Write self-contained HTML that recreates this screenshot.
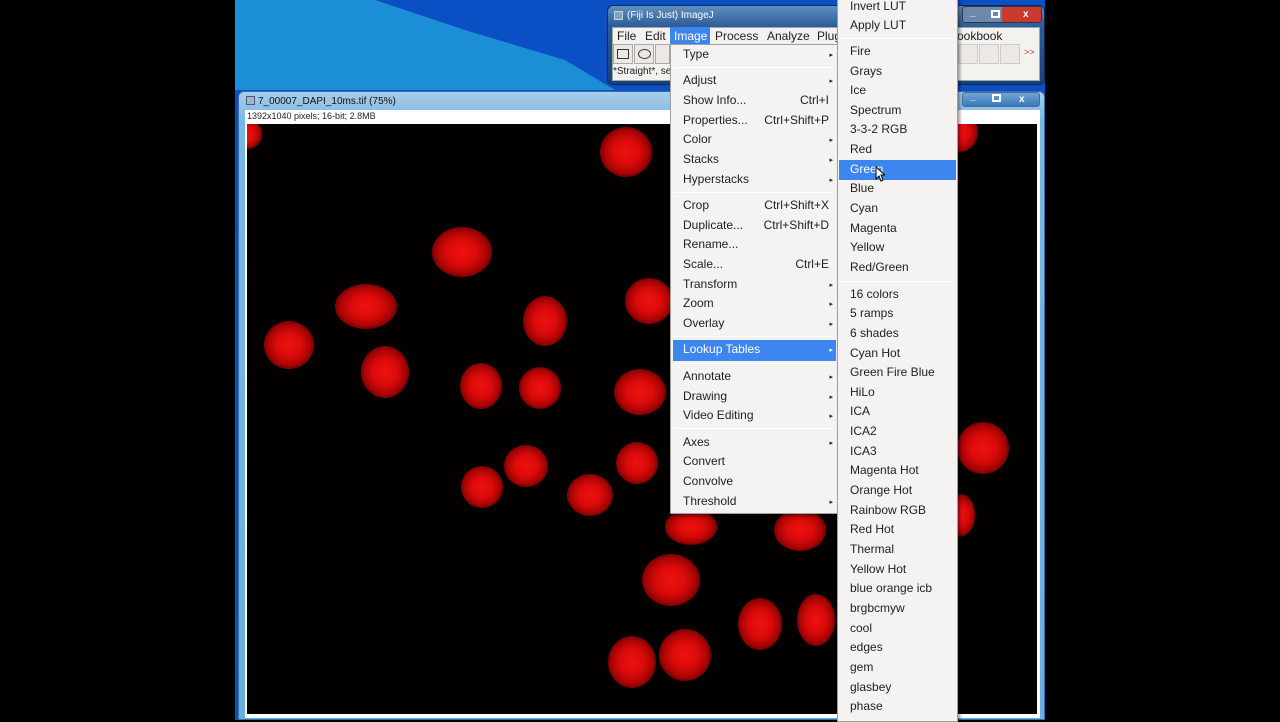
<!DOCTYPE html>
<html><head><meta charset="utf-8"><style>
*{margin:0;padding:0;box-sizing:border-box}
body{width:1280px;height:720px;overflow:hidden;background:#000;position:relative;font-family:"Liberation Sans",sans-serif;font-size:12px;color:#1e1e1e}
.abs{position:absolute}
#desk{left:235px;top:0;width:810px;height:720px;background:#0a4fc4;overflow:hidden}
.n{position:absolute;border-radius:50%;background:radial-gradient(ellipse at center,#ec1212 0%,#dc0a0a 35%,#a80404 60%,#4a0000 80%,rgba(20,0,0,0) 100%)}
.mi{position:absolute;left:12px;white-space:nowrap}
.sc{position:absolute;right:8px}
.ar{position:absolute;right:4px;font-size:7px}
.sep{position:absolute;left:3px;right:3px;height:1px;background:#c8c8c8;border-bottom:1px solid #fff}
.si{position:absolute;left:12px;white-space:nowrap}
</style></head><body>
<div id="desk" class="abs">
 <div class="abs" style="left:0;top:0;width:810px;height:720px;background:#1c8ed6;clip-path:polygon(0 0,140px 0,230px 30px,330px 60px,380px 90px,0 90px)"></div>
</div>
<!-- image window -->
<div class="abs" style="left:238px;top:91px;width:807px;height:629px;background:linear-gradient(#a8cdea,#7ab6e4 30px,#6aaede);border:1px solid #3b6ea8;border-radius:6px 6px 0 0"></div>
<div class="abs" style="left:258px;top:96px;font-size:10px;color:#111">7_00007_DAPI_10ms.tif (75%)</div>
<div class="abs" style="left:246px;top:96px;width:9px;height:9px;border:1px solid #557;background:#9bc"></div>
<div class="abs" style="left:962px;top:92px;width:78px;height:15px;border:1px solid #4a6b9a;border-radius:3px;background:linear-gradient(#6fa6d6,#3d78b8);color:#fff;font-size:10px;font-weight:bold">
 <span class="abs" style="left:7px;top:-2px">_</span><span class="abs" style="left:29px;top:1px;width:9px;height:8px;border:2px solid #fff"></span><span class="abs" style="left:56px;top:1px">x</span></div>
<div class="abs" style="left:245px;top:110px;width:795px;height:608px;background:#fff"></div>
<div class="abs" style="left:247px;top:111px;font-size:9px;color:#222">1392x1040 pixels; 16-bit; 2.8MB</div>
<div class="abs" style="left:247px;top:124px;width:790px;height:590px;background:#030000;overflow:hidden">
 <div class="n" style="left:-15px;top:-5px;width:30px;height:30px"></div>
 <div class="n" style="left:353px;top:3px;width:52px;height:50px"></div>
 <div class="n" style="left:185px;top:103px;width:60px;height:50px"></div>
 <div class="n" style="left:88px;top:160px;width:62px;height:45px"></div>
 <div class="n" style="left:17px;top:197px;width:50px;height:48px"></div>
 <div class="n" style="left:276px;top:172px;width:44px;height:50px"></div>
 <div class="n" style="left:114px;top:222px;width:48px;height:52px"></div>
 <div class="n" style="left:213px;top:239px;width:42px;height:46px"></div>
 <div class="n" style="left:272px;top:243px;width:42px;height:42px"></div>
 <div class="n" style="left:367px;top:245px;width:52px;height:46px"></div>
 <div class="n" style="left:378px;top:154px;width:48px;height:46px"></div>
 <div class="n" style="left:257px;top:321px;width:44px;height:42px"></div>
 <div class="n" style="left:214px;top:342px;width:42px;height:42px"></div>
 <div class="n" style="left:320px;top:350px;width:46px;height:42px"></div>
 <div class="n" style="left:369px;top:318px;width:42px;height:42px"></div>
 <div class="n" style="left:418px;top:385px;width:52px;height:36px"></div>
 <div class="n" style="left:527px;top:385px;width:52px;height:42px"></div>
 <div class="n" style="left:395px;top:430px;width:58px;height:52px"></div>
 <div class="n" style="left:491px;top:474px;width:44px;height:52px"></div>
 <div class="n" style="left:550px;top:470px;width:38px;height:52px"></div>
 <div class="n" style="left:361px;top:512px;width:48px;height:52px"></div>
 <div class="n" style="left:412px;top:505px;width:52px;height:52px"></div>
 <div class="n" style="left:710px;top:298px;width:52px;height:52px"></div>
 <div class="n" style="left:700px;top:370px;width:28px;height:42px"></div>
 <div class="n" style="left:695px;top:-12px;width:36px;height:40px"></div>
</div>
<!-- Fiji window -->
<div class="abs" style="left:607px;top:5px;width:438px;height:80px;background:linear-gradient(#5f8fc0,#2e5c98 20px,#1c3f78);border:1px solid #0c2a55;border-radius:6px"></div>
<div class="abs" style="left:627px;top:10px;font-size:10px;color:#fff">(Fiji Is Just) ImageJ</div>
<div class="abs" style="left:614px;top:11px;width:9px;height:9px;border:1px solid #ccd;background:#7ab"></div>
<div class="abs" style="left:962px;top:6px;width:80px;height:17px;border:1px solid #334;border-radius:3px;background:linear-gradient(90deg,#6e88ac 0 50%,#c83a2e 50%);color:#fff;font-size:10px;font-weight:bold">
 <span class="abs" style="left:7px;top:0">_</span><span class="abs" style="left:28px;top:3px;width:9px;height:8px;border:2px solid #fff"></span><span class="abs" style="left:60px;top:2px">x</span></div>
<div class="abs" style="left:612px;top:27px;width:428px;height:54px;background:#f4f2ef;border:1px solid #9aa"></div>
<div class="abs" style="left:617px;top:29px">File</div>
<div class="abs" style="left:645px;top:29px">Edit</div>
<div class="abs" style="left:670px;top:27px;width:40px;height:17px;background:#3d86ef"></div>
<div class="abs" style="left:674px;top:29px;color:#fff">Image</div>
<div class="abs" style="left:715px;top:29px">Process</div>
<div class="abs" style="left:767px;top:29px">Analyze</div>
<div class="abs" style="left:817px;top:29px">Plug</div>
<div class="abs" style="left:957px;top:29px">ookbook</div>
<div class="abs" style="left:613px;top:44px;width:20px;height:20px;border:1px solid #aaa;background:#ece9e4"><div class="abs" style="left:3px;top:4px;width:12px;height:10px;border:1px solid #333"></div></div>
<div class="abs" style="left:634px;top:44px;width:20px;height:20px;border:1px solid #aaa;background:#ece9e4"><div class="abs" style="left:3px;top:4px;width:13px;height:10px;border:1px solid #333;border-radius:50%"></div></div>
<div class="abs" style="left:655px;top:44px;width:15px;height:20px;border:1px solid #aaa;background:#ece9e4"></div>
<div class="abs" style="left:958px;top:44px;width:20px;height:20px;border:1px solid #ccc;background:#ece9e4"></div>
<div class="abs" style="left:979px;top:44px;width:20px;height:20px;border:1px solid #ccc;background:#ece9e4"></div>
<div class="abs" style="left:1000px;top:44px;width:20px;height:20px;border:1px solid #ccc;background:#ece9e4"></div>
<div class="abs" style="left:1024px;top:47px;font-size:9px;color:#c33">&gt;&gt;</div>
<div class="abs" style="left:613px;top:66px;font-size:10px">*Straight*, se</div>
<!-- Image menu -->
<div class="abs" style="left:670px;top:44px;width:168px;height:470px;background:#f5f3f1;border:1px solid #a0a0a0;box-shadow:2px 2px 3px rgba(0,0,0,.4)">
 <div class="mi" style="top:2px">Type</div><div class="ar" style="top:6px">▸</div>
 <div class="sep" style="top:22px"></div>
 <div class="mi" style="top:28px">Adjust</div><div class="ar" style="top:32px">▸</div>
 <div class="mi" style="top:48px">Show Info...</div><div class="sc" style="top:48px">Ctrl+I</div>
 <div class="mi" style="top:68px">Properties...</div><div class="sc" style="top:68px">Ctrl+Shift+P</div>
 <div class="mi" style="top:87px">Color</div><div class="ar" style="top:91px">▸</div>
 <div class="mi" style="top:107px">Stacks</div><div class="ar" style="top:111px">▸</div>
 <div class="mi" style="top:127px">Hyperstacks</div><div class="ar" style="top:131px">▸</div>
 <div class="sep" style="top:147px"></div>
 <div class="mi" style="top:153px">Crop</div><div class="sc" style="top:153px">Ctrl+Shift+X</div>
 <div class="mi" style="top:173px">Duplicate...</div><div class="sc" style="top:173px">Ctrl+Shift+D</div>
 <div class="mi" style="top:192px">Rename...</div>
 <div class="mi" style="top:212px">Scale...</div><div class="sc" style="top:212px">Ctrl+E</div>
 <div class="mi" style="top:232px">Transform</div><div class="ar" style="top:236px">▸</div>
 <div class="mi" style="top:251px">Zoom</div><div class="ar" style="top:255px">▸</div>
 <div class="mi" style="top:271px">Overlay</div><div class="ar" style="top:275px">▸</div>
 <div class="sep" style="top:291px"></div>
 <div class="abs" style="left:2px;top:295px;width:163px;height:21px;background:#3d86ef"></div>
 <div class="mi" style="top:297px;color:#fff">Lookup Tables</div><div class="ar" style="top:301px;color:#fff">▸</div>
 <div class="sep" style="top:318px"></div>
 <div class="mi" style="top:324px">Annotate</div><div class="ar" style="top:328px">▸</div>
 <div class="mi" style="top:344px">Drawing</div><div class="ar" style="top:348px">▸</div>
 <div class="mi" style="top:363px">Video Editing</div><div class="ar" style="top:367px">▸</div>
 <div class="sep" style="top:383px"></div>
 <div class="mi" style="top:390px">Axes</div><div class="ar" style="top:394px">▸</div>
 <div class="mi" style="top:409px">Convert</div>
 <div class="mi" style="top:429px">Convolve</div>
 <div class="mi" style="top:449px">Threshold</div><div class="ar" style="top:453px">▸</div>
</div>
<!-- LUT submenu -->
<div class="abs" style="left:837px;top:-2px;width:121px;height:724px;background:#f5f3f1;border:1px solid #a0a0a0;box-shadow:2px 2px 3px rgba(0,0,0,.4)">
 <div class="si" style="top:0px">Invert LUT</div>
 <div class="si" style="top:19px">Apply LUT</div>
 <div class="sep" style="top:39px"></div>
 <div class="si" style="top:45px">Fire</div>
 <div class="si" style="top:65px">Grays</div>
 <div class="si" style="top:84px">Ice</div>
 <div class="si" style="top:104px">Spectrum</div>
 <div class="si" style="top:123px">3-3-2 RGB</div>
 <div class="si" style="top:143px">Red</div>
 <div class="abs" style="left:1px;top:161px;width:117px;height:20px;background:#3d86ef"></div>
 <div class="si" style="top:163px;color:#fff">Green</div>
 <div class="si" style="top:182px">Blue</div>
 <div class="si" style="top:202px">Cyan</div>
 <div class="si" style="top:222px">Magenta</div>
 <div class="si" style="top:241px">Yellow</div>
 <div class="si" style="top:261px">Red/Green</div>
 <div class="sep" style="top:282px"></div>
 <div class="si" style="top:288px">16 colors</div>
 <div class="si" style="top:307px">5 ramps</div>
 <div class="si" style="top:327px">6 shades</div>
 <div class="si" style="top:347px">Cyan Hot</div>
 <div class="si" style="top:366px">Green Fire Blue</div>
 <div class="si" style="top:386px">HiLo</div>
 <div class="si" style="top:405px">ICA</div>
 <div class="si" style="top:425px">ICA2</div>
 <div class="si" style="top:445px">ICA3</div>
 <div class="si" style="top:464px">Magenta Hot</div>
 <div class="si" style="top:484px">Orange Hot</div>
 <div class="si" style="top:504px">Rainbow RGB</div>
 <div class="si" style="top:523px">Red Hot</div>
 <div class="si" style="top:543px">Thermal</div>
 <div class="si" style="top:563px">Yellow Hot</div>
 <div class="si" style="top:582px">blue orange icb</div>
 <div class="si" style="top:602px">brgbcmyw</div>
 <div class="si" style="top:622px">cool</div>
 <div class="si" style="top:641px">edges</div>
 <div class="si" style="top:661px">gem</div>
 <div class="si" style="top:681px">glasbey</div>
 <div class="si" style="top:700px">phase</div>
</div>
<svg class="abs" style="left:875px;top:166px" width="10" height="16" viewBox="0 0 10 16"><path d="M1 1 L1 13 L4 10 L6 15 L8 14 L6 9 L10 9 Z" fill="#fff" stroke="#000" stroke-width="1"/></svg>
</body></html>
